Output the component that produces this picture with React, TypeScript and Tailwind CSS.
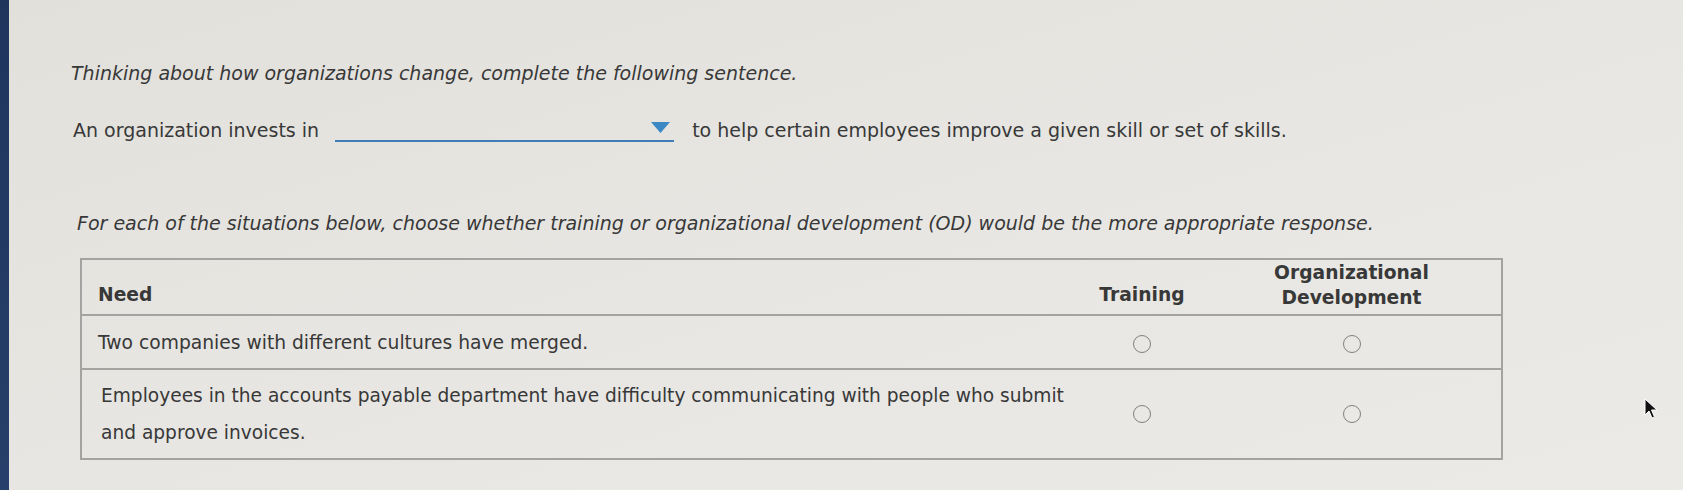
import React from "react";

const font = { fontFamily: '"DejaVu Sans", Verdana, sans-serif' };

function Radio() {
  return <div className="w-[18px] h-[18px] rounded-full border-[1.5px] border-[#808080]" />;
}

const cols = "grid grid-cols-[1000px_120px_1fr]";

export default function App() {
  return (
    <div
      className="relative flex h-[490px] w-full overflow-hidden bg-gradient-to-br from-[#e2e0db] via-[#e7e6e2] to-[#ebeae6] text-[#383838]"
      style={font}
    >
      <div className="w-[9px] shrink-0 bg-gradient-to-b from-[#1f355c] to-[#26406b]" />
      <div className="flex-1 pl-[62px]">
        <p className="mt-[61px] whitespace-nowrap text-[19px] italic leading-[24px]">
          Thinking about how organizations change, complete the following sentence.
        </p>
        <div className="mt-[30px] flex items-end whitespace-nowrap text-[19px] leading-[24px]">
          <span className="ml-[2px]">An organization invests in</span>
          <div className="ml-[16px] flex h-[27px] w-[339px] items-center justify-end border-b-2 border-[#3f7db7] pr-[4px]">
            <svg width="19" height="11" viewBox="0 0 19 11" className="mb-[1px]">
              <path d="M0 0 L19 0 L9.5 11 Z" fill="#3a88c4" />
            </svg>
          </div>
          <span className="ml-[18px]">to help certain employees improve a given skill or set of skills.</span>
        </div>
        <p className="ml-[6px] mt-[69px] whitespace-nowrap text-[19px] italic leading-[24px]">
          For each of the situations below, choose whether training or organizational development (OD) would be the more appropriate response.
        </p>
        <div className="ml-[9px] mt-[23px] w-[1423px] border-2 border-[#a3a3a1] text-[18.7px]">
          <div className={`${cols} h-[56px] border-b-2 border-[#a3a3a1] font-bold`}>
            <div className="flex items-end pb-[8px] pl-[16px]">Need</div>
            <div className="flex items-end justify-center pb-[8px]">Training</div>
            <div className="flex flex-col items-center justify-end pb-[7px] leading-[25px]">
              <span>Organizational</span>
              <span>Development</span>
            </div>
          </div>
          <div className={`${cols} h-[54px] border-b-2 border-[#a3a3a1]`}>
            <div className="flex items-center whitespace-nowrap pl-[16px] pt-[2px]">Two companies with different cultures have merged.</div>
            <div className="flex items-center justify-center pt-[3px]"><Radio /></div>
            <div className="flex items-center justify-center pt-[3px]"><Radio /></div>
          </div>
          <div className={`${cols} h-[88px]`}>
            <div className="flex items-center whitespace-nowrap pl-[19px] text-[18.6px] leading-[37px]">
              <span>
                Employees in the accounts payable department have difficulty communicating with people who submit
                <br />
                and approve invoices.
              </span>
            </div>
            <div className="flex items-center justify-center"><Radio /></div>
            <div className="flex items-center justify-center"><Radio /></div>
          </div>
        </div>
      </div>
      <svg className="absolute left-[1644px] top-[398px]" width="16" height="22" viewBox="0 0 16 22">
        <path d="M1 1 L1 17 L5 13 L8 20 L10.5 19 L7.5 12 L13 12 Z" fill="#111" stroke="#fff" strokeWidth="1" />
      </svg>
    </div>
  );
}
